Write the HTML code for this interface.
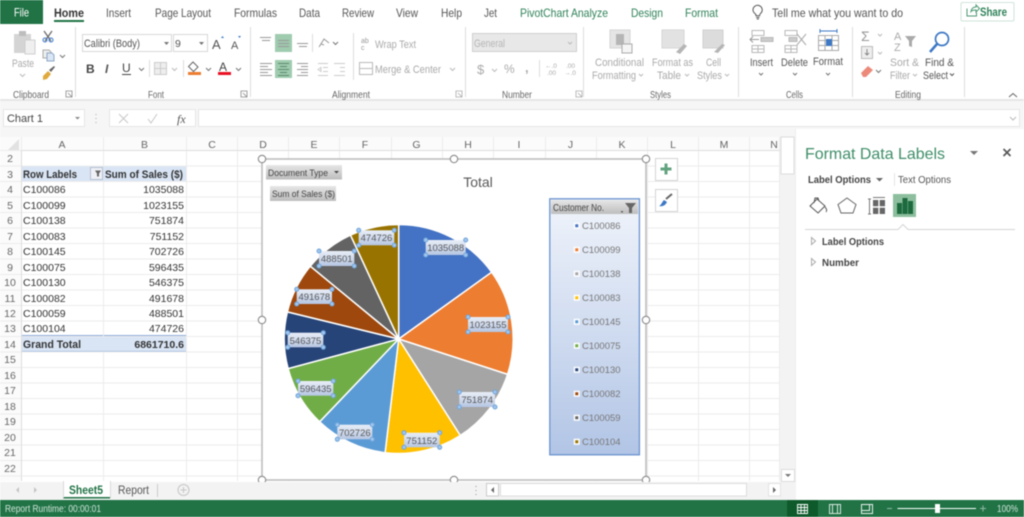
<!DOCTYPE html>
<html><head><meta charset="utf-8"><title>Excel</title>
<style>
html,body{margin:0;padding:0;background:#fff;width:1024px;height:517px;overflow:hidden}
svg{display:block;filter:blur(.45px)}
text{font-family:"Liberation Sans",sans-serif;font-size:10.5px;fill:#444}
.tab{font-size:12px;fill:#555}
.gt{font-size:12px;fill:#2f8259}
.dis{font-size:11px;fill:#aaa}
.act{font-size:11px;fill:#555}
.grp{font-size:10px;fill:#666}
.cell{font-size:10.5px;fill:#333}
.r{font-size:10.5px;fill:#333;text-anchor:end}
.b{font-size:11px;font-weight:bold;fill:#333}
.hd{font-size:10.5px;fill:#666;text-anchor:middle}
.lb{font-size:9.5px;fill:#595959;text-anchor:middle}
.lg{font-size:9.5px;fill:#777}
.h{fill:#a3c6ec;stroke:#6fa5dc;stroke-width:1}
.ch{fill:none;stroke:#777;stroke-width:1}
.chd{fill:none;stroke:#bbb;stroke-width:1}
</style></head><body>
<svg width="1024" height="517" viewBox="0 0 1024 517" xmlns="http://www.w3.org/2000/svg">
<defs>
<linearGradient id="lbg" x1="0" y1="0" x2="0" y2="1"><stop offset="0" stop-color="#e9eef7"/><stop offset="1" stop-color="#b6c6e2"/></linearGradient>
<linearGradient id="leg" x1="0" y1="0" x2="0" y2="1"><stop offset="0" stop-color="#f0f4fb"/><stop offset="1" stop-color="#b2c5e6"/></linearGradient>
<linearGradient id="gb" x1="0" y1="0" x2="0" y2="1"><stop offset="0" stop-color="#e6e6e6"/><stop offset="1" stop-color="#bdbdbd"/></linearGradient>
</defs>
<rect width="1024" height="517" fill="#fff"/>

<!-- tabs -->
<rect x="0" y="0" width="43" height="24" fill="#217346"/>
<text x="14" y="16.500" textLength="15" lengthAdjust="spacingAndGlyphs" style="font-size:12px;fill:#fff">File</text>
<text class="tab" x="54" y="17" textLength="30" lengthAdjust="spacingAndGlyphs" style="fill:#333;font-weight:bold">Home</text>
<rect x="54" y="20" width="30" height="2" fill="#217346"/>
<text class="tab" x="106" y="17" textLength="25" lengthAdjust="spacingAndGlyphs">Insert</text>
<text class="tab" x="155" y="17" textLength="56" lengthAdjust="spacingAndGlyphs">Page Layout</text>
<text class="tab" x="234" y="17" textLength="43" lengthAdjust="spacingAndGlyphs">Formulas</text>
<text class="tab" x="299" y="17" textLength="21" lengthAdjust="spacingAndGlyphs">Data</text>
<text class="tab" x="342" y="17" textLength="32" lengthAdjust="spacingAndGlyphs">Review</text>
<text class="tab" x="396" y="17" textLength="22" lengthAdjust="spacingAndGlyphs">View</text>
<text class="tab" x="441" y="17" textLength="21" lengthAdjust="spacingAndGlyphs">Help</text>
<text class="tab" x="484" y="17" textLength="13" lengthAdjust="spacingAndGlyphs">Jet</text>
<text class="gt" x="520" y="17" textLength="88" lengthAdjust="spacingAndGlyphs">PivotChart Analyze</text>
<text class="gt" x="631" y="17" textLength="32" lengthAdjust="spacingAndGlyphs">Design</text>
<text class="gt" x="685" y="17" textLength="33" lengthAdjust="spacingAndGlyphs">Format</text>
<path d="M752 12a4.600 4.600 0 1 1 7.500 3.500c-.8.7-.9 1.300-.9 2.200h-3.600c0-.9-.2-1.500-1-2.200a4.500 4.500 0 0 1-2-3.500zM755.200 19.500h3.200M755.800 21h2" transform="translate(1 -2)" fill="none" stroke="#555" stroke-width="1"/>
<text class="tab" x="772" y="17" textLength="131" lengthAdjust="spacingAndGlyphs">Tell me what you want to do</text>
<rect x="961" y="2.500" width="53" height="18.500" rx="1.500" fill="#fff" stroke="#d3e3da"/>
<path d="M967 9v7.500h9.500V13M971 12c.5-3 2.500-4.500 5-4.500V5.500l3.500 3.500-3.500 3.500v-2c-2 0-4 .3-5 1.500z" transform="translate(0 -.5) scale(1)" fill="none" stroke="#4c9a73" stroke-width="1"/>
<text x="980" y="16" textLength="27" lengthAdjust="spacingAndGlyphs" style="font-size:12px;font-weight:bold;fill:#2f8259">Share</text>

<!-- ribbon dividers -->
<g stroke="#dcdcdc" stroke-width="1">
<path d="M75.500 27V97M250.500 27V97M465.500 27V97M583.500 27V97M738.500 27V97M852.500 27V97M964.500 27V97M353.500 33V80M312.500 34V52M539.500 60V77M149.500 60V77M183.500 60V77"/>
</g>
<rect x="0" y="99" width="1024" height="2" fill="#e6e6e6"/>
<rect x="0" y="101" width="1024" height="36" fill="#f6f6f6"/>

<!-- clipboard -->
<rect x="14" y="34" width="17" height="19" fill="#d4d4d4"/><rect x="19" y="31" width="7" height="5" fill="#bdbdbd"/>
<path d="M25 40h10v14H25z" fill="#efefef" stroke="#cfcfcf"/>
<text class="dis" x="12" y="67" textLength="22" lengthAdjust="spacingAndGlyphs">Paste</text>
<path class="chd" d="M20 74l2.500 2.500L25 74"/>
<path d="M44 31l7 10M52 31l-7 10" stroke="#666" stroke-width="1.200" fill="none"/><circle cx="45" cy="40" r="2" fill="none" stroke="#3d78c5"/><circle cx="51" cy="40" r="2" fill="none" stroke="#3d78c5"/>
<path d="M43 50h6l2 2v6h-8z" fill="#eee" stroke="#aaa"/><path d="M47 53h5l2 2v6h-7z" fill="#dbe6f4" stroke="#8ea7c7"/>
<path class="ch" d="M60 55l2.500 2.500L65 55"/>
<path d="M43 76l5-5 3 3-4 5-4 1z" fill="#e0a93c"/><path d="M49 70l5-4 1 1-4 5z" fill="#666"/>
<text class="grp" x="13" y="98" textLength="36" lengthAdjust="spacingAndGlyphs">Clipboard</text>
<path d="M66 91h6v6h-6z M68 93l4 4" fill="none" stroke="#888" stroke-width=".8"/>

<!-- font -->
<rect x="82.500" y="34.500" width="89" height="17" fill="#fff" stroke="#d8d8d8"/>
<rect x="173.500" y="34.500" width="34" height="17" fill="#fff" stroke="#d8d8d8"/>
<text x="84" y="47" textLength="56" lengthAdjust="spacingAndGlyphs" style="font-size:11px;fill:#555">Calibri (Body)</text>
<text x="175" y="47" style="fill:#555">9</text>
<path d="M164 42h5l-2.500 3zM199 42h5l-2.500 3z" fill="#777"/>
<text x="212" y="49" style="font-size:13px;fill:#555">A</text><text x="231" y="49" style="font-size:11px;fill:#555">A</text>
<path d="M221 38l1.500-2 1.500 2zM238 36l1.500 2 1.500-2z" fill="#3d78c5"/>
<text x="86" y="73" style="font-size:12px;font-weight:bold;fill:#444">B</text>
<text x="105" y="73" style="font-size:12px;font-style:italic;font-weight:bold;fill:#555">I</text>
<text x="122" y="72" style="font-size:12px;fill:#444">U</text><rect x="122" y="74" width="9" height="1" fill="#444"/>
<path class="ch" d="M139 68l2.500 2.500L144 68"/>
<path d="M154.500 62.500h12v12h-12zM160.500 62.500v12M154.500 68.500h12" fill="#eee" stroke="#ccc"/>
<path class="chd" d="M172 68l2.500 2.500L177 68"/>
<path d="M193 62l5 5-4.500 4.500-5-5z" fill="#fff" stroke="#666"/><rect x="188" y="72" width="13" height="3" fill="#ed7d31"/>
<path class="ch" d="M206 68l2.500 2.500L211 68"/>
<text x="219" y="71" style="font-size:12px;fill:#444">A</text><rect x="218" y="72" width="13" height="3" fill="#e81123"/>
<path class="ch" d="M236 68l2.500 2.500L241 68"/>
<text class="grp" x="148" y="98" textLength="16" lengthAdjust="spacingAndGlyphs">Font</text>
<path d="M241 91h6v6h-6z M243 93l4 4" fill="none" stroke="#888" stroke-width=".8"/>

<!-- alignment -->
<rect x="275" y="34" width="17" height="18" fill="#9fcbae"/>
<rect x="275" y="60" width="17" height="18" fill="#9fcbae"/>
<g stroke="#999" stroke-width="1" fill="none">
<path d="M260 37.500h11M262 40.500h8M278 40.500h11M278 43.500h11M278 46.500h11M297 43.500h11M299 46.500h8"/>
<path d="M260 63.500h12M260 66.500h8M260 69.500h12M260 72.500h8M260 75.500h12"/>
<path d="M278 63.500h11M280 66.500h7M278 69.500h11M280 72.500h7M278 75.500h11" stroke="#5d8a6e"/>
<path d="M297 63.500h11M301 66.500h7M297 69.500h11M301 72.500h7M297 75.500h11"/>
<path d="M319 47l5-8 5 4M321 44l3 1"/>
<path d="M333 42l2.500 2.500L338 42" stroke="#777"/>
</g>
<g stroke="#ccc" fill="none"><path d="M318 63.500h10M318 75.500h10M323 67.500h5M323 71.500h5M318 69.500l3-2v4zM334 63.500h11M334 75.500h11M340 67.500h5M340 71.500h5"/></g>
<text x="361" y="43" style="font-size:7px;fill:#999">ab</text><text x="361" y="50" style="font-size:7px;fill:#999">c</text>
<text class="dis" x="375" y="48" textLength="41" lengthAdjust="spacingAndGlyphs">Wrap Text</text>
<path d="M359.500 62.500h13v12h-13zM359.500 68.500h13" fill="none" stroke="#bbb"/>
<text class="dis" x="375" y="73" textLength="66" lengthAdjust="spacingAndGlyphs">Merge &amp; Center</text>
<path class="chd" d="M450 68l2.500 2.500L455 68"/>
<text class="grp" x="332" y="98" textLength="38" lengthAdjust="spacingAndGlyphs">Alignment</text>
<path d="M456 91h6v6h-6z M458 93l4 4" fill="none" stroke="#aaa" stroke-width=".8"/>

<!-- number -->
<rect x="472.500" y="33.500" width="104" height="18" fill="#e8e8e8" stroke="#cfcfcf"/>
<text x="474" y="47" textLength="31" lengthAdjust="spacingAndGlyphs" style="font-size:11px;fill:#b5b5b5">General</text>
<path class="chd" d="M568 42l2 2 2-2"/>
<text x="477" y="74" style="font-size:13px;fill:#aaa">$</text><path class="chd" d="M492 69l2.500 2.500L497 69"/>
<text x="504" y="73" style="font-size:12px;fill:#aaa">%</text><text x="525" y="72" style="font-size:13px;font-weight:bold;fill:#aaa">,</text>
<text x="545" y="68" style="font-size:6.500px;fill:#aaa">←.0</text><text x="547" y="75" style="font-size:6.500px;fill:#aaa">.00</text>
<text x="566" y="68" style="font-size:6.500px;fill:#aaa">.00</text><text x="564" y="75" style="font-size:6.500px;fill:#aaa">→.0</text>
<text class="grp" x="502" y="98" textLength="30" lengthAdjust="spacingAndGlyphs">Number</text>
<path d="M576 91h6v6h-6z M578 93l4 4" fill="none" stroke="#aaa" stroke-width=".8"/>

<!-- styles -->
<rect x="610" y="30" width="20" height="18" fill="#e5e5e5" stroke="#d5d5d5"/><rect x="616" y="34" width="8" height="11" fill="#b5b5b5"/>
<rect x="622" y="44" width="10" height="9" fill="#f5f5f5" stroke="#aaa"/>
<text class="dis" x="595" y="66" textLength="49" lengthAdjust="spacingAndGlyphs">Conditional</text>
<text class="dis" x="592" y="79" textLength="44" lengthAdjust="spacingAndGlyphs">Formatting</text><path class="chd" d="M639 74l2 2 2-2"/>
<rect x="662" y="30" width="22" height="18" fill="#e2e2e2" stroke="#d5d5d5"/><path d="M676 52l8-8 3 2-7 8z" fill="#b5b5b5"/>
<text class="dis" x="652" y="66" textLength="41" lengthAdjust="spacingAndGlyphs">Format as</text>
<text class="dis" x="657" y="79" textLength="24" lengthAdjust="spacingAndGlyphs">Table</text><path class="chd" d="M685 74l2 2 2-2"/>
<rect x="703" y="30" width="20" height="18" fill="#dcdcdc" stroke="#d0d0d0"/><path d="M714 52l8-8 3 1-7 8z" fill="#b5b5b5"/>
<text class="dis" x="706" y="66" textLength="15" lengthAdjust="spacingAndGlyphs">Cell</text>
<text class="dis" x="697" y="79" textLength="25" lengthAdjust="spacingAndGlyphs">Styles</text><path class="chd" d="M725 74l2 2 2-2"/>
<text class="grp" x="650" y="98" textLength="21" lengthAdjust="spacingAndGlyphs">Styles</text>

<!-- cells -->
<g fill="none" stroke="#b8b8b8">
<path d="M752 30.500h12v5h-12zM752 45.500h12v7h-12zM758 45.500v7M752 49h12"/>
<rect x="761" y="37.500" width="12" height="4" fill="#ccc"/>
<path d="M750 39.500h9M753 36.500l-3 3 3 3" stroke="#999"/>
<path d="M785 30.500h12v5h-12zM785 45.500h12v7h-12zM791 45.500v7M785 49h12"/>
<rect x="789" y="37.500" width="8" height="4" fill="#ccc"/>
<path d="M797 34l9 11M806 34l-9 11" stroke="#aaa"/>
<path d="M818.500 35.500h20v15h-20zM825 35.500v15M832 35.500v15M818.500 40.500h20M818.500 45.500h20" stroke="#aaa"/>
<path d="M820 31h17M820 29v4M837 29v4" stroke="#3d78c5"/>
</g>
<rect x="826" y="39" width="6" height="7" fill="#3d78c5"/>
<path class="ch" d="M759 73l2 2 2-2M793 73l2 2 2-2M826 73l2 2 2-2"/>
<text class="act" x="750" y="66" textLength="23" lengthAdjust="spacingAndGlyphs">Insert</text>
<text class="act" x="781" y="66" textLength="27" lengthAdjust="spacingAndGlyphs">Delete</text>
<text class="act" x="813" y="65" textLength="30" lengthAdjust="spacingAndGlyphs">Format</text>
<text class="grp" x="786" y="98" textLength="17" lengthAdjust="spacingAndGlyphs">Cells</text>

<!-- editing -->
<text x="861" y="41" style="font-size:14px;fill:#999">Σ</text><path class="chd" d="M878 34l2 2 2-2"/>
<rect x="861.500" y="46.500" width="11" height="12" fill="#eee" stroke="#bbb"/><path d="M867 49v6M865 53l2 2 2-2" stroke="#888" fill="none"/><path class="chd" d="M878 52l2 2 2-2"/>
<path d="M861 73l7-7 5 4-7 7h-3z" fill="#ec8a7a"/><path class="ch" d="M876 70l2.500 2.500L881 70"/>
<text x="894" y="40" style="font-size:11px;fill:#aaa">A</text><text x="894" y="51" style="font-size:11px;fill:#aaa">Z</text>
<path d="M905 36h11l-4 5v6l-3-1v-5z" fill="#aaa"/>
<text class="dis" x="890" y="66" textLength="29" lengthAdjust="spacingAndGlyphs">Sort &amp;</text>
<text class="dis" x="890" y="79" textLength="20" lengthAdjust="spacingAndGlyphs">Filter</text><path class="chd" d="M913 74l2 2 2-2"/>
<circle cx="942" cy="39" r="6.500" fill="none" stroke="#3d78c5" stroke-width="1.700"/><path d="M937 44l-7 8" stroke="#3d78c5" stroke-width="2.500"/>
<text class="act" x="925" y="66" textLength="29" lengthAdjust="spacingAndGlyphs">Find &amp;</text>
<text class="act" x="923" y="79" textLength="25" lengthAdjust="spacingAndGlyphs">Select</text><path d="M950 73.500l2 2 2-2" fill="none" stroke="#555"/>
<text class="grp" x="895" y="98" textLength="26" lengthAdjust="spacingAndGlyphs">Editing</text>
<path d="M1009 97l4-3.500 4 3.500" fill="none" stroke="#666"/>

<!-- formula bar -->
<rect x="3.500" y="109.500" width="81" height="17" fill="#fff" stroke="#e6e6e6"/>
<text x="7" y="122" textLength="36" lengthAdjust="spacingAndGlyphs" style="font-size:11px;fill:#444">Chart 1</text>
<path d="M75 117h5l-2.500 2.500z" fill="#888"/>
<path d="M96 114v1M96 118v1M96 122v1" stroke="#aaa"/>
<rect x="109.500" y="109.500" width="86" height="17" fill="#fff" stroke="#e6e6e6"/>
<path d="M119 114l9 9M128 114l-9 9" stroke="#c8c8c8" fill="none"/>
<path d="M148 119l3 4 6-9" stroke="#c8c8c8" fill="none"/>
<text x="177" y="123" style="font-family:'Liberation Serif',serif;font-size:12px;font-style:italic;fill:#555">fx</text>
<rect x="198.500" y="109.500" width="821" height="17" fill="#fff" stroke="#e6e6e6"/>
<path d="M1010 117l3 3 3-3" class="chd"/>

<!-- sheet -->
<rect x="0" y="137" width="796" height="345" fill="#fff"/>
<rect x="0" y="137" width="780" height="14" fill="#fbfbfb"/>
<rect x="0" y="151" width="21" height="330" fill="#fbfbfb"/>
<path d="M8 150l11-11v11z" fill="#e2e2e2"/>
<rect x="21" y="166" width="165" height="15.500" fill="#d9e5f5"/>
<rect x="21" y="336" width="165" height="15.500" fill="#d9e5f5"/>
<path d="M21 335.500h165" stroke="#8eaadb"/>
<path d="M21 351.500h165" stroke="#8eaadb"/>
<g stroke="#ececec" stroke-width="1" fill="none">
<path d="M21.500 137V481M103.500 137V166M103.500 182V336M103.500 352V481M186.500 137V481M237.500 137V481M288.500 137V481M339.500 137V481M391.500 137V481M442.500 137V481M493.500 137V481M545.500 137V481M596.500 137V481M647.500 137V481M698.500 137V481M749.500 137V481M779.500 137V481"/>
<path d="M0 150.500H780M0 166H780M0 181.500H780M0 197H780M0 212.500H780M0 228H780M0 243.500H780M0 259H780M0 274.500H780M0 290H780M0 305.500H780M0 321H780M0 336.500H780M0 352H780M0 367.500H780M0 383H780M0 398.500H780M0 414H780M0 429.500H780M0 445H780M0 460.500H780M0 476H780"/>
</g>
<path d="M21 150.500H780" stroke="#dedede"/>
<path d="M21.500 150V481" stroke="#dedede"/>
<!-- col heads -->
<text class="hd" x="62" y="148">A</text><text class="hd" x="144.500" y="148">B</text><text class="hd" x="212" y="148">C</text><text class="hd" x="263" y="148">D</text><text class="hd" x="314" y="148">E</text><text class="hd" x="365" y="148">F</text><text class="hd" x="416.500" y="148">G</text><text class="hd" x="468" y="148">H</text><text class="hd" x="519" y="148">I</text><text class="hd" x="570.500" y="148">J</text><text class="hd" x="622" y="148">K</text><text class="hd" x="673" y="148">L</text><text class="hd" x="724" y="148">M</text><text class="hd" x="774" y="148">N</text>
<!-- row heads -->
<text class="hd" x="10" y="162">2</text><text class="hd" x="10" y="178">3</text><text class="hd" x="10" y="193">4</text><text class="hd" x="10" y="209">5</text><text class="hd" x="10" y="224">6</text><text class="hd" x="10" y="240">7</text><text class="hd" x="10" y="255">8</text><text class="hd" x="10" y="271">9</text><text class="hd" x="10" y="286">10</text><text class="hd" x="10" y="302">11</text><text class="hd" x="10" y="317">12</text><text class="hd" x="10" y="332">13</text><text class="hd" x="10" y="348">14</text><text class="hd" x="10" y="363">15</text><text class="hd" x="10" y="379">16</text><text class="hd" x="10" y="394">17</text><text class="hd" x="10" y="410">18</text><text class="hd" x="10" y="425">19</text><text class="hd" x="10" y="441">20</text><text class="hd" x="10" y="456">21</text><text class="hd" x="10" y="472">22</text>
<!-- cells -->
<text class="b" x="23" y="178" textLength="54" lengthAdjust="spacingAndGlyphs">Row Labels</text>
<rect x="90.500" y="167.500" width="12" height="12" fill="#eef1f6" stroke="#b5bfce"/><path d="M95 170.500h6l-2 3v3h-2v-3z" fill="#666"/>
<text class="b" x="105" y="178" textLength="78" lengthAdjust="spacingAndGlyphs">Sum of Sales ($)</text>
<text class="cell" x="23" y="193">C100086</text><text class="r" x="184" y="193">1035088</text>
<text class="cell" x="23" y="209">C100099</text><text class="r" x="184" y="209">1023155</text>
<text class="cell" x="23" y="224">C100138</text><text class="r" x="184" y="224">751874</text>
<text class="cell" x="23" y="240">C100083</text><text class="r" x="184" y="240">751152</text>
<text class="cell" x="23" y="255">C100145</text><text class="r" x="184" y="255">702726</text>
<text class="cell" x="23" y="271">C100075</text><text class="r" x="184" y="271">596435</text>
<text class="cell" x="23" y="286">C100130</text><text class="r" x="184" y="286">546375</text>
<text class="cell" x="23" y="302">C100082</text><text class="r" x="184" y="302">491678</text>
<text class="cell" x="23" y="317">C100059</text><text class="r" x="184" y="317">488501</text>
<text class="cell" x="23" y="332">C100104</text><text class="r" x="184" y="332">474726</text>
<text class="b" x="23" y="348" textLength="58" lengthAdjust="spacingAndGlyphs">Grand Total</text><text class="r" x="184" y="348" style="font-weight:bold">6861710.6</text>

<!-- chart -->
<rect x="262" y="159" width="384" height="321" fill="#fff" stroke="#bdbdbd" stroke-width="1.600"/>
<g stroke="#fff" stroke-width="1.500">
<path d="M398.700 339V224.500A114.500 114.500 0 0 1 491.700 272.200Z" fill="#4472c4"/>
<path d="M398.700 339L491.700 272.200A114.500 114.500 0 0 1 507.600 374.400Z" fill="#ed7d31"/>
<path d="M398.700 339L507.600 374.400A114.500 114.500 0 0 1 460.300 435.500Z" fill="#a5a5a5"/>
<path d="M398.700 339L460.300 435.500A114.500 114.500 0 0 1 385.100 452.700Z" fill="#ffc000"/>
<path d="M398.700 339L385.100 452.700A114.500 114.500 0 0 1 319.600 421.800Z" fill="#5b9bd5"/>
<path d="M398.700 339L319.600 421.800A114.500 114.500 0 0 1 288.100 368.600Z" fill="#70ad47"/>
<path d="M398.700 339L288.100 368.600A114.500 114.500 0 0 1 287.400 311.900Z" fill="#264478"/>
<path d="M398.700 339L287.400 311.900A114.500 114.500 0 0 1 310.300 266.200Z" fill="#9e480e"/>
<path d="M398.700 339L310.300 266.200A114.500 114.500 0 0 1 350.500 235.100Z" fill="#636363"/>
<path d="M398.700 339L350.500 235.100A114.500 114.500 0 0 1 398.700 224.500Z" fill="#997300"/>
</g>
<text x="478" y="187" text-anchor="middle" style="font-size:14px;fill:#595959">Total</text>
<rect x="266" y="165" width="76" height="14.500" fill="url(#gb)"/>
<text x="268" y="176" textLength="60" lengthAdjust="spacingAndGlyphs" style="font-size:9.500px;fill:#444">Document Type</text>
<path d="M334 171h5l-2.500 2.500z" fill="#444"/>
<rect x="270" y="186" width="66" height="15" fill="url(#gb)"/>
<text x="272" y="197" textLength="63" lengthAdjust="spacingAndGlyphs" style="font-size:9.500px;fill:#444">Sum of Sales ($)</text>

<!-- labels -->
<g stroke="none">
<rect x="425.700" y="240" width="40" height="15" fill="url(#lbg)"/><text class="lb" x="445.700" y="251">1035088</text>
<rect x="358.700" y="230.300" width="35.600" height="15" fill="url(#lbg)"/><text class="lb" x="376.500" y="241">474726</text>
<rect x="319" y="251" width="35.300" height="15" fill="url(#lbg)"/><text class="lb" x="336.700" y="262">488501</text>
<rect x="296.700" y="289.300" width="35.300" height="14.700" fill="url(#lbg)"/><text class="lb" x="314.300" y="300">491678</text>
<rect x="468" y="317" width="40" height="15" fill="url(#lbg)"/><text class="lb" x="488" y="328">1023155</text>
<rect x="287.700" y="332.700" width="35.600" height="14.600" fill="url(#lbg)"/><text class="lb" x="305.500" y="344">546375</text>
<rect x="298" y="381" width="35.300" height="14.700" fill="url(#lbg)"/><text class="lb" x="315.700" y="392">596435</text>
<rect x="337.300" y="424.700" width="35" height="14.600" fill="url(#lbg)"/><text class="lb" x="354.800" y="436">702726</text>
<rect x="404" y="432.700" width="35.700" height="14.600" fill="url(#lbg)"/><text class="lb" x="421.800" y="444">751152</text>
<rect x="459.300" y="392" width="35.700" height="15" fill="url(#lbg)"/><text class="lb" x="477.200" y="403">751874</text>
</g>
<g class="hs">
<circle class="h" cx="425.700" cy="240" r="2"/><circle class="h" cx="465.700" cy="240" r="2"/><circle class="h" cx="425.700" cy="255" r="2"/><circle class="h" cx="465.700" cy="255" r="2"/>
<circle class="h" cx="358.700" cy="230.300" r="2"/><circle class="h" cx="394.300" cy="230.300" r="2"/><circle class="h" cx="358.700" cy="245.300" r="2"/><circle class="h" cx="394.300" cy="245.300" r="2"/>
<circle class="h" cx="319" cy="251" r="2"/><circle class="h" cx="354.300" cy="251" r="2"/><circle class="h" cx="319" cy="266" r="2"/><circle class="h" cx="354.300" cy="266" r="2"/>
<circle class="h" cx="296.700" cy="289.300" r="2"/><circle class="h" cx="332" cy="289.300" r="2"/><circle class="h" cx="296.700" cy="304" r="2"/><circle class="h" cx="332" cy="304" r="2"/>
<circle class="h" cx="468" cy="317" r="2"/><circle class="h" cx="508" cy="317" r="2"/><circle class="h" cx="468" cy="332" r="2"/><circle class="h" cx="508" cy="332" r="2"/>
<circle class="h" cx="287.700" cy="332.700" r="2"/><circle class="h" cx="323.300" cy="332.700" r="2"/><circle class="h" cx="287.700" cy="347.300" r="2"/><circle class="h" cx="323.300" cy="347.300" r="2"/>
<circle class="h" cx="298" cy="381" r="2"/><circle class="h" cx="333.300" cy="381" r="2"/><circle class="h" cx="298" cy="395.700" r="2"/><circle class="h" cx="333.300" cy="395.700" r="2"/>
<circle class="h" cx="337.300" cy="424.700" r="2"/><circle class="h" cx="372.300" cy="424.700" r="2"/><circle class="h" cx="337.300" cy="439.300" r="2"/><circle class="h" cx="372.300" cy="439.300" r="2"/>
<circle class="h" cx="404" cy="432.700" r="2"/><circle class="h" cx="439.700" cy="432.700" r="2"/><circle class="h" cx="404" cy="447.300" r="2"/><circle class="h" cx="439.700" cy="447.300" r="2"/>
<circle class="h" cx="459.300" cy="392" r="2"/><circle class="h" cx="495" cy="392" r="2"/><circle class="h" cx="459.300" cy="407" r="2"/><circle class="h" cx="495" cy="407" r="2"/>
</g>

<!-- legend -->
<rect x="549.800" y="198.800" width="89.600" height="256" fill="url(#leg)" stroke="#6a93cf" stroke-width="1.300"/>
<rect x="551" y="200" width="87" height="14" fill="url(#gb)"/>
<text x="553" y="211" textLength="51" lengthAdjust="spacingAndGlyphs" style="font-size:10px;fill:#444">Customer No.</text>
<path d="M621 211h2v1.500h-2zM625 203h11l-4 5v5h-3v-5z" fill="#666"/>
<g stroke="#fff" stroke-width="1.500">
<rect x="574.500" y="223.500" width="4.500" height="4.500" fill="#4472c4"/><rect x="574.500" y="247.500" width="4.500" height="4.500" fill="#ed7d31"/><rect x="574.500" y="271.500" width="4.500" height="4.500" fill="#a5a5a5"/><rect x="574.500" y="295.500" width="4.500" height="4.500" fill="#ffc000"/><rect x="574.500" y="319.500" width="4.500" height="4.500" fill="#5b9bd5"/><rect x="574.500" y="343.500" width="4.500" height="4.500" fill="#70ad47"/><rect x="574.500" y="367.500" width="4.500" height="4.500" fill="#264478"/><rect x="574.500" y="391.500" width="4.500" height="4.500" fill="#9e480e"/><rect x="574.500" y="415.500" width="4.500" height="4.500" fill="#636363"/><rect x="574.500" y="439.500" width="4.500" height="4.500" fill="#997300"/>
</g>
<text class="lg" x="582" y="229">C100086</text><text class="lg" x="582" y="253">C100099</text><text class="lg" x="582" y="277">C100138</text><text class="lg" x="582" y="301">C100083</text><text class="lg" x="582" y="325">C100145</text><text class="lg" x="582" y="349">C100075</text><text class="lg" x="582" y="373">C100130</text><text class="lg" x="582" y="397">C100082</text><text class="lg" x="582" y="421">C100059</text><text class="lg" x="582" y="445">C100104</text>

<!-- handles -->
<g fill="#fff" stroke="#8a8a8a" stroke-width="1.100">
<circle cx="262" cy="159" r="3.700"/><circle cx="454" cy="159" r="3.700"/><circle cx="646" cy="159" r="3.700"/><circle cx="262" cy="320" r="3.700"/><circle cx="646" cy="320" r="3.700"/><circle cx="262" cy="480" r="3.700"/><circle cx="454" cy="480" r="3.700"/><circle cx="646" cy="480" r="3.700"/>
</g>

<!-- chart buttons -->
<rect x="655.500" y="158.500" width="22" height="22" fill="#fff" stroke="#d5d5d5"/>
<path d="M666 163.500v11M660.500 169h11" stroke="#62a37f" stroke-width="3"/>
<rect x="655.500" y="189.500" width="22" height="22" fill="#fff" stroke="#d5d5d5"/>
<path d="M666 199l6-5" stroke="#666" stroke-width="2"/><path d="M659 206c2-.5 3-4 5-6l3 2c-1 2-3 5-8 4z" fill="#3d78c5"/>

<!-- vertical scrollbar -->
<rect x="780" y="137" width="16" height="345" fill="#f3f3f3"/>
<rect x="781" y="137" width="13" height="37" fill="#fff" stroke="#dcdcdc"/>
<rect x="781.500" y="469.500" width="13" height="12" fill="#fff" stroke="#dcdcdc"/>
<path d="M785 474h6l-3 3z" fill="#777"/>

<!-- panel -->
<rect x="796" y="129" width="228" height="371" fill="#fff"/>
<path d="M795.500 129V482" stroke="#eee"/>
<text x="805" y="159" textLength="140" lengthAdjust="spacingAndGlyphs" style="font-size:16px;fill:#3f8e69">Format Data Labels</text>
<path d="M970 151h8l-4 4z" fill="#777"/>
<path d="M1003.500 149l7 7M1010.500 149l-7 7" stroke="#555" stroke-width="1.600"/>
<text x="808" y="183" textLength="63" lengthAdjust="spacingAndGlyphs" style="font-size:10px;font-weight:bold;fill:#444">Label Options</text>
<path d="M876 178h7l-3.500 3.500z" fill="#666"/>
<path d="M894.500 173V186" stroke="#e3e3e3"/>
<text x="898" y="183" textLength="53" lengthAdjust="spacingAndGlyphs" style="font-size:10px;fill:#555">Text Options</text>
<path d="M810 206l7-7 8 7-7 7zM814 203l1-5h3l1 3M825 207c2 2 2 4 1 5" fill="none" stroke="#555" stroke-width="1"/>
<path d="M847 198l9 6.500-3 8.500h-12l-3-8.500z" fill="none" stroke="#666"/>
<path d="M868 199h3M868 214h3M869.500 199v15M873 197.500h12" stroke="#777" fill="none"/>
<rect x="873" y="200" width="12" height="14" fill="#666"/><path d="M879 200v14M873 207h12" stroke="#fff" stroke-width="1.400"/>
<rect x="893" y="194" width="23" height="23" fill="#8dbf9f"/>
<rect x="897" y="203" width="5" height="11" fill="#1e6a3f"/><rect x="902.500" y="198" width="5" height="16" fill="#1e6a3f"/><rect x="908" y="201" width="5" height="13" fill="#1e6a3f"/>
<path d="M805 229.500H898l5-5 5 5H1015" fill="none" stroke="#d5d5d5"/>
<path d="M811.500 237.500l4 3.500-4 3.500zM811.500 258.500l4 3.500-4 3.500z" fill="#fff" stroke="#aaa"/>
<text x="822" y="245" textLength="62" lengthAdjust="spacingAndGlyphs" style="font-size:10px;font-weight:bold;fill:#444">Label Options</text>
<text x="822" y="266" textLength="37" lengthAdjust="spacingAndGlyphs" style="font-size:10px;font-weight:bold;fill:#444">Number</text>

<!-- sheet tabs -->
<rect x="0" y="482" width="796" height="18" fill="#f3f3f3"/>
<path d="M19 487v6l-3-3zM34 487v6l3-3z" fill="#c5c5c5"/>
<rect x="63" y="481" width="47" height="17" fill="#fff"/>
<rect x="63" y="497" width="47" height="1.500" fill="#217346"/>
<path d="M63.500 481v17M110.500 481v17" stroke="#d8d8d8"/>
<text x="69" y="494" textLength="34" lengthAdjust="spacingAndGlyphs" style="font-size:12px;font-weight:bold;fill:#217346">Sheet5</text>
<text x="118" y="494" textLength="31" lengthAdjust="spacingAndGlyphs" style="font-size:12px;fill:#555">Report</text>
<path d="M157.500 484v13" stroke="#ccc"/>
<circle cx="183.500" cy="490" r="5.500" fill="none" stroke="#c5c5c5"/><path d="M180.500 490h6M183.500 487v6" stroke="#c5c5c5"/>
<path d="M476 486v1M476 490v1M476 494v1" stroke="#999"/>
<rect x="486.500" y="483.500" width="12" height="12.500" fill="#fff" stroke="#ccc"/>
<path d="M494 487v6l-3-3z" fill="#666"/>
<rect x="500.500" y="483.500" width="246" height="12.500" fill="#fff" stroke="#ddd"/>
<rect x="768.500" y="483.500" width="12" height="12.500" fill="#fff" stroke="#e2e2e2"/>
<path d="M773 487v6l3-3z" fill="#666"/>

<!-- status -->
<rect x="0" y="500" width="1024" height="17" fill="#217346"/>
<text x="5" y="512" textLength="96" lengthAdjust="spacingAndGlyphs" style="font-size:10px;fill:#cfe3d8">Report Runtime:  00:00:01</text>
<rect x="787" y="500" width="31" height="17" fill="#0e5a2b"/>
<path d="M797.500 504.500h10v9h-10zM797.500 507.500h10M797.500 510.500h10M801 504.500v9M804.500 504.500v9" fill="none" stroke="#fff" stroke-width=".9"/>
<path d="M829.500 504.500h11v9h-11zM832.500 504.500v9M837.500 504.500v9" fill="none" stroke="#d5e6dc"/>
<path d="M861.500 504.500h11v9h-11zM861.500 510.500h8v-6" fill="none" stroke="#e8f1ec"/>
<path d="M887 508.500h5" stroke="#8fb8a3"/>
<path d="M897.500 508.500H976" stroke="#fff"/>
<rect x="935" y="504" width="5" height="9" fill="#fff"/>
<path d="M980 508.500h6M983 505.500v6" stroke="#8fb8a3"/>
<text x="997" y="512" textLength="21" lengthAdjust="spacingAndGlyphs" style="font-size:10px;fill:#cfe3d8">100%</text>
</svg>
</body></html>
